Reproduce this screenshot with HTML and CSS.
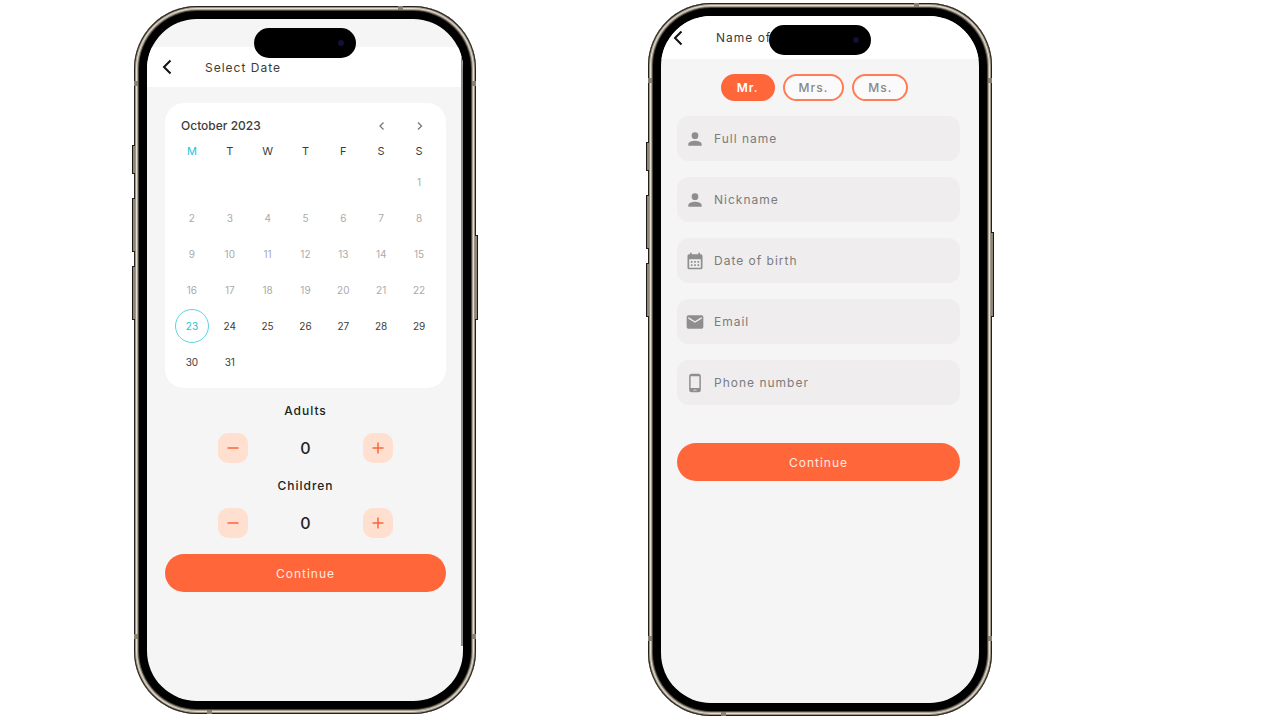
FILE: index.html
```
<!DOCTYPE html>
<html lang="en">
  <head>
    <meta charset="UTF-8" />
    <meta name="viewport" content="width=device-width, initial-scale=1.0" />
    <title>Booking</title>
    <link rel="stylesheet" href="styles.css" />
  </head>
  <body>
    <main>
      <section class="phone phone-date">
        <span class="key key-action"></span>
        <span class="key key-up"></span>
        <span class="key key-down"></span>
        <span class="key key-power"></span>
        <span class="band band-top"></span>
        <span class="band band-upper"></span>
        <span class="band band-lower"></span>
        <span class="band band-bottom"></span>
        <span class="island"></span>
        <div class="screen">
          <header>
            <button class="back" aria-label="Back">
              <svg viewBox="0 0 10 16"><path d="M8.5 1.5 2 8l6.500 6.500" /></svg>
            </button>
            <h1>Select Date</h1>
          </header>

          <div class="content">
            <div class="calendar">
              <div class="month">
                <h2>October 2023</h2>
                <button aria-label="Previous month">
                  <svg viewBox="0 0 7 10"><path d="M5.500 1.500 2 5l3.500 3.500" /></svg>
                </button>
                <button aria-label="Next month">
                  <svg viewBox="0 0 7 10"><path d="M2 1.500 5.500 5 2 8.500" /></svg>
                </button>
              </div>
              <table>
                <thead>
                  <tr>
                    <th class="today">M</th>
                    <th>T</th>
                    <th>W</th>
                    <th>T</th>
                    <th>F</th>
                    <th>S</th>
                    <th>S</th>
                  </tr>
                </thead>
                <tbody>
                  <tr class="past">
                    <td></td><td></td><td></td><td></td><td></td><td></td><td>1</td>
                  </tr>
                  <tr class="past">
                    <td>2</td><td>3</td><td>4</td><td>5</td><td>6</td><td>7</td><td>8</td>
                  </tr>
                  <tr class="past">
                    <td>9</td><td>10</td><td>11</td><td>12</td><td>13</td><td>14</td><td>15</td>
                  </tr>
                  <tr class="past">
                    <td>16</td><td>17</td><td>18</td><td>19</td><td>20</td><td>21</td><td>22</td>
                  </tr>
                  <tr>
                    <td class="today"><span>23</span></td><td>24</td><td>25</td><td>26</td><td>27</td><td>28</td><td>29</td>
                  </tr>
                  <tr>
                    <td>30</td><td>31</td><td></td><td></td><td></td><td></td><td></td>
                  </tr>
                </tbody>
              </table>
            </div>

            <h3>Adults</h3>
            <div class="stepper">
              <button aria-label="Remove adult">
                <svg viewBox="0 0 12 12"><path d="M.5 6h11" /></svg>
              </button>
              <output>0</output>
              <button aria-label="Add adult">
                <svg viewBox="0 0 12 12"><path d="M.5 6h11M6 .5v11" /></svg>
              </button>
            </div>

            <h3>Children</h3>
            <div class="stepper">
              <button aria-label="Remove child">
                <svg viewBox="0 0 12 12"><path d="M.5 6h11" /></svg>
              </button>
              <output>0</output>
              <button aria-label="Add child">
                <svg viewBox="0 0 12 12"><path d="M.5 6h11M6 .5v11" /></svg>
              </button>
            </div>

            <button class="continue">Continue</button>
          </div>
        </div>
      </section>

      <section class="phone phone-name">
        <span class="key key-action"></span>
        <span class="key key-up"></span>
        <span class="key key-down"></span>
        <span class="key key-power"></span>
        <span class="band band-top"></span>
        <span class="band band-upper"></span>
        <span class="band band-lower"></span>
        <span class="band band-bottom"></span>
        <span class="island"></span>
        <div class="screen">
          <header>
            <button class="back" aria-label="Back">
              <svg viewBox="0 0 10 16"><path d="M8.5 1.5 2 8l6.500 6.500" /></svg>
            </button>
            <h1>Name of</h1>
          </header>

          <form class="content">
            <div class="titles">
              <button type="button" class="active">Mr.</button>
              <button type="button">Mrs.</button>
              <button type="button">Ms.</button>
            </div>

            <label class="field">
              <svg viewBox="0 0 24 24"><path d="M12 12a4 4 0 1 0 0-8 4 4 0 0 0 0 8zm0 2c-2.700 0-8 1.300-8 4v2h16v-2c0-2.700-5.300-4-8-4z" /></svg>
              <input type="text" placeholder="Full name" aria-label="Full name" />
            </label>
            <label class="field">
              <svg viewBox="0 0 24 24"><path d="M12 12a4 4 0 1 0 0-8 4 4 0 0 0 0 8zm0 2c-2.700 0-8 1.300-8 4v2h16v-2c0-2.700-5.300-4-8-4z" /></svg>
              <input type="text" placeholder="Nickname" aria-label="Nickname" />
            </label>
            <label class="field">
              <svg viewBox="0 0 24 24"><path fill-rule="evenodd" d="M19 4h-1V2h-2v2H8V2H6v2H5a2 2 0 0 0-2 2v14a2 2 0 0 0 2 2h14a2 2 0 0 0 2-2V6a2 2 0 0 0-2-2zm0 16H5V10h14v10zM7 12h2v2H7zm4 0h2v2h-2zm4 0h2v2h-2zM7 16h2v2H7zm4 0h2v2h-2zm4 0h2v2h-2z" /></svg>
              <input type="text" placeholder="Date of birth" aria-label="Date of birth" />
            </label>
            <label class="field">
              <svg viewBox="0 0 24 24"><path d="M20 4H4a2 2 0 0 0-2 2v12a2 2 0 0 0 2 2h16a2 2 0 0 0 2-2V6a2 2 0 0 0-2-2zm0 4-8 5-8-5V6l8 5 8-5v2z" /></svg>
              <input type="email" placeholder="Email" aria-label="Email" />
            </label>
            <label class="field">
              <svg viewBox="0 0 24 24"><path fill-rule="evenodd" d="M16 1H8a3 3 0 0 0-3 3v16a3 3 0 0 0 3 3h8a3 3 0 0 0 3-3V4a3 3 0 0 0-3-3zm-2 20h-4v-1h4v1zm3.250-3H6.750V4h10.500v14z" /></svg>
              <input type="tel" placeholder="Phone number" aria-label="Phone number" />
            </label>

            <button type="button" class="continue">Continue</button>
          </form>
        </div>
      </section>
    </main>
  </body>
</html>
```
FILE: styles.css
```
* {
  box-sizing: border-box;
}

body {
  margin: 0;
  background-color: white;
  font-family: Inter, "Liberation Sans", sans-serif;
  color: #3c3c3c;
}

h1,
h2,
h3 {
  margin: 0;
}

button {
  font-family: inherit;
  padding: 0;
  border: none;
  background: none;
  cursor: pointer;
}

svg {
  display: block;
}

main {
  display: flex;
  gap: 172px;
  min-height: 100vh;
  padding-left: 134px;
}

/* phone frame */

.phone {
  position: relative;
  display: flex;
  flex: 0 1 342px;
  padding: 13px;
  border-radius: 63px;
  background-color: black;
  box-shadow: inset 0 0 0 1px #25221e, inset 0 0 0 2px #9c9588,
    inset 0 0 0 3px #e4ddd1, inset 0 0 0 4px #aaa191, inset 0 0 0 5px #4b453c;
}

.phone-date {
  margin: 6px 0;
}

.phone-name {
  flex-basis: 344px;
  margin: 3px 0 4px;
}

.screen {
  position: relative;
  flex: 1;
  min-width: 0;
  border-radius: 50px;
  overflow: hidden;
  background-color: #f5f5f5;
}

.phone-date .screen {
  padding-top: 28px;
}

/* thin scroll bar on the right edge */
.phone-date .screen::after {
  content: "";
  position: absolute;
  top: 28px;
  right: 0;
  bottom: 55px;
  width: 2px;
  background-color: #8b8b8b;
}

.island {
  position: absolute;
  z-index: 1;
  top: 22px;
  left: calc(50% - 51px);
  width: 102px;
  height: 30px;
  border-radius: 15px;
  background-color: black;
}

.island::after {
  content: "";
  position: absolute;
  top: 12px;
  right: 12px;
  width: 6px;
  height: 6px;
  border-radius: 50%;
  background-color: #10103a;
}

.key {
  position: absolute;
  left: -2px;
  width: 3px;
  border: 1px solid #1d1a16;
  border-width: 1px 0 1px 1px;
  background-color: #8d8577;
}

.key-action {
  top: 139px;
  height: 29px;
}

.key-up {
  top: 192px;
  height: 54px;
}

.key-down {
  top: 260px;
  height: 54px;
}

.key-power {
  top: 229px;
  left: auto;
  right: -2px;
  height: 85px;
  border-width: 1px 1px 1px 0;
}

.band {
  position: absolute;
}

.band-top,
.band-bottom {
  width: 5px;
  height: 4px;
  background-color: #8a8271;
}

.band-top {
  top: 0;
  right: 73px;
}

.band-bottom {
  bottom: 0;
  left: 73px;
}

.band-upper,
.band-lower {
  left: 0;
  right: 0;
  height: 5px;
  border: 4px solid #8a8271;
  border-width: 0 4px;
}

.band-upper {
  top: 75px;
}

.band-lower {
  bottom: 75px;
}

/* header */

header {
  display: flex;
  align-items: center;
  height: 40px;
  padding-left: 15px;
  background-color: white;
}

.phone-name header {
  height: 43px;
  padding-left: 12px;
}

.back svg {
  width: 10px;
  height: 16px;
  fill: none;
  stroke: #111;
  stroke-width: 2;
}

h1 {
  margin-left: 33px;
  font-size: 12px;
  font-weight: 400;
  letter-spacing: 1px;
}

/* calendar */

.content {
  padding: 16px 17px 0 18px;
}

.calendar {
  padding: 10px 8px 8px;
  border-radius: 19px;
  background-color: white;
}

.month {
  display: grid;
  grid-template-columns: 5fr 1fr 1fr;
  align-items: center;
  height: 25px;
}

.month button {
  display: flex;
  justify-content: center;
}

.month svg {
  width: 7px;
  height: 10px;
  fill: none;
  stroke: #777;
  stroke-width: 1.3;
}

h2 {
  padding-left: 8px;
  font-size: 12px;
  font-weight: 500;
}

table {
  width: 100%;
  table-layout: fixed;
  border-collapse: collapse;
}

th,
td {
  padding: 0;
  text-align: center;
}

th {
  height: 26px;
  font-size: 11px;
  font-weight: 400;
}

td {
  height: 36px;
  font-size: 10px;
}

.past {
  color: #aaa;
}

.today {
  color: #26c2d6;
}

.today span {
  display: flex;
  align-items: center;
  justify-content: center;
  width: 34px;
  height: 34px;
  margin: 0 auto;
  border: 1px solid #5fd3e2;
  border-radius: 50%;
}

/* guests */

h3 {
  margin: 13px 0 12px;
  font-size: 12px;
  font-weight: 500;
  line-height: 20px;
  letter-spacing: 1px;
  text-align: center;
  color: #222;
}

.stepper {
  display: flex;
  align-items: center;
  justify-content: space-between;
  width: 176px;
  margin: 0 auto;
}

.stepper button {
  display: flex;
  align-items: center;
  justify-content: center;
  width: 30px;
  height: 30px;
  border-radius: 10px;
  background-color: #ffe0d0;
}

.stepper svg {
  width: 12px;
  height: 12px;
  fill: none;
  stroke: #ff6639;
  stroke-width: 1.5;
}

output {
  font-size: 16px;
  font-weight: 500;
  color: #222;
}

.continue {
  display: block;
  width: 100%;
  height: 38px;
  margin-top: 16px;
  border-radius: 19px;
  background-color: #ff6639;
  color: #ffe9e1;
  font-size: 12px;
  letter-spacing: 1px;
}

/* name form */

.phone-name .content {
  padding: 15px 19px 0 16px;
}

.titles {
  display: flex;
  justify-content: center;
  gap: 8px;
  margin-bottom: 15px;
  padding-right: 8px;
}

.titles button {
  height: 27px;
  padding: 0 14px;
  border: 2px solid #ff7c55;
  border-radius: 14px;
  background-color: #fafafa;
  color: #888;
  font-size: 12px;
  font-weight: 500;
  letter-spacing: 1px;
}

.titles .active {
  border-color: #ff6639;
  background-color: #ff6639;
  color: white;
  font-weight: 600;
}

.field {
  display: flex;
  align-items: center;
  gap: 9px;
  height: 45px;
  margin-bottom: 16px;
  padding: 0 8px;
  border-radius: 12px;
  background-color: #efedee;
}

.field svg {
  width: 20px;
  height: 20px;
  fill: #8e8e8e;
}

.field input {
  flex: 1;
  min-width: 0;
  padding: 0;
  border: none;
  outline: none;
  background: none;
  font-family: inherit;
  font-size: 12px;
  letter-spacing: 1px;
}

.field input::placeholder {
  color: #7c7c7c;
}

.phone-name .continue {
  margin-top: 38px;
}
```
